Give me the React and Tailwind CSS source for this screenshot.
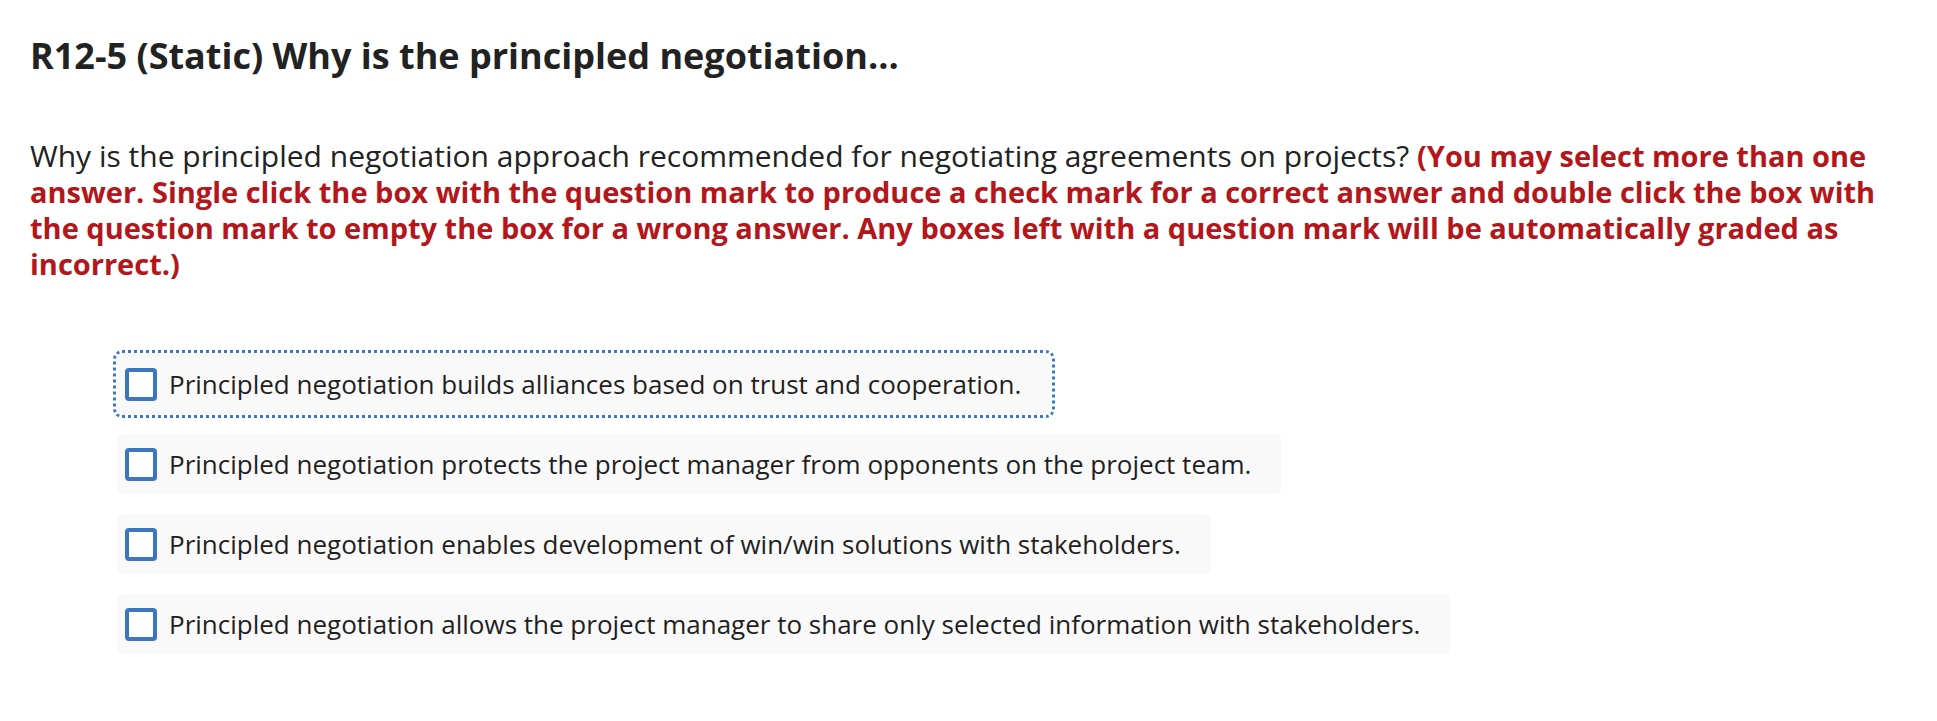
import React from 'react';

const options = [
  'Principled negotiation builds alliances based on trust and cooperation.',
  'Principled negotiation protects the project manager from opponents on the project team.',
  'Principled negotiation enables development of win/win solutions with stakeholders.',
  'Principled negotiation allows the project manager to share only selected information with stakeholders.',
];

const Option = ({ text, focused }) => (
  <div
    className={
      focused
        ? 'flex h-[60px] items-center rounded-[5px] bg-[#f9f9f9] pl-[8px] pr-[30px] outline-[3px] outline-dotted outline-[#3a78c4] outline-offset-[1px]'
        : 'flex h-[60px] items-center rounded-[5px] bg-[#f9f9f9] pl-[8px] pr-[30px]'
    }
  >
    <span className="mr-[12px] h-[33px] w-[32px] shrink-0 rounded-[4px] border-[4px] border-[#3b77c1] bg-white" />
    <span className="text-[26px] text-[#1f1f1f]">{text}</span>
  </div>
);

export default function App() {
  return (
    <div className="min-h-screen bg-white pl-[30px] pt-[34px] font-['Open_Sans','Liberation_Sans',sans-serif]">
      <h1 className="text-[36px] font-bold leading-[44px] text-[#222]">
        R12-5 (Static) Why is the principled negotiation...
      </h1>

      <p className="mt-[60px] max-w-[1875px] text-[30px] leading-[36px] text-[#222]">
        Why is the principled negotiation approach recommended for negotiating agreements on projects?{' '}
        <strong className="text-[29px] font-bold text-[#b3161b]">
          (You may select more than one answer. Single click the box with the question mark to produce a check mark
          for a correct answer and double click the box with the question mark to empty the box for a wrong answer.
          Any boxes left with a question mark will be automatically graded as incorrect.)
        </strong>
      </p>

      <div className="ml-[87px] mt-[72px] flex flex-col items-start gap-[20px]">
        {options.map((text, i) => (
          <Option key={i} text={text} focused={i === 0} />
        ))}
      </div>
    </div>
  );
}
